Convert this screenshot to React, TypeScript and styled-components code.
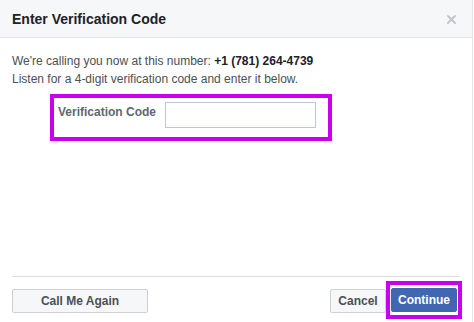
import React from "react";
import styled, { createGlobalStyle } from "styled-components";

const Global = createGlobalStyle`
  html, body { margin: 0; padding: 0; background: #fff; }
  body { font-family: "Liberation Sans", Arial, Helvetica, sans-serif; }
`;

const Dialog = styled.div`
  width: 472px;
  height: 322px;
  border-right: 1px solid #e3e4e6;
  display: flex;
  flex-direction: column;
  background: #fff;
`;

const Header = styled.div`
  height: 37px;
  background: #f6f7f9;
  border-bottom: 1px solid #e5e5e5;
  display: flex;
  align-items: center;
  justify-content: space-between;
  padding: 0 12px;
`;

const Title = styled.div`
  font-size: 14px;
  font-weight: bold;
  color: #1d2129;
  padding-top: 1px;
`;

const Close = styled.svg`
  width: 9px;
  height: 9px;
  margin-right: 4px;
  margin-top: 2px;
`;

const Body = styled.div`
  flex: 1;
  padding: 14px 12px 0;
`;

const Para = styled.p`
  margin: 0;
  font-size: 12px;
  line-height: 18px;
  color: #4b4f56;
  b { color: #1d2129; }
`;

const Highlight = styled.div`
  border: 4px solid #c800ee;
  box-sizing: border-box;
  width: 282px;
  height: 47px;
  margin: 6px 0 0 38px;
  padding: 4px 12px 0 4px;
  display: flex;
  align-items: flex-start;
`;

const Label = styled.label`
  flex: 1;
  white-space: nowrap;
  font-size: 12px;
  font-weight: bold;
  color: #606770;
  line-height: 16px;
  padding-top: 2px;
`;

const Input = styled.input`
  box-sizing: border-box;
  width: 151px;
  height: 26px;
  border: 1px solid #bdc7d8;
  padding: 3px;
  font: 12px "Liberation Sans", Arial, sans-serif;
  outline: none;
`;

const Footer = styled.div`
  margin: 0 12px;
  border-top: 1px solid #dddfe2;
  height: 46px;
  padding-top: 12px;
  box-sizing: border-box;
  display: flex;
  justify-content: space-between;
  align-items: flex-start;
`;

const Right = styled.div`
  display: flex;
  align-items: flex-start;
  margin-top: -8px;
  margin-right: -2px;
`;

const Button = styled.button<{ $primary?: boolean; $w: number }>`
  box-sizing: border-box;
  width: ${(p) => p.$w}px;
  height: 24px;
  border: 1px solid ${(p) => (p.$primary ? "#4267b2" : "#ced0d4")};
  background: ${(p) => (p.$primary ? "#4267b2" : "#f6f7f9")};
  color: ${(p) => (p.$primary ? "#fff" : "#4b4f56")};
  font: bold 12px "Liberation Sans", Arial, sans-serif;
  border-radius: 2px;
  padding: 0;
  display: flex;
  align-items: center;
  justify-content: center;
`;

const CancelWrap = styled.div`
  padding-top: 8px;
`;

const PrimaryHighlight = styled.div`
  border: 4px solid #c800ee;
  padding: 3px 1px;
`;

export default function App() {
  return (
    <>
      <Global />
      <Dialog>
        <Header>
          <Title>Enter Verification Code</Title>
          <Close viewBox="0 0 9 9">
            <path d="M1 1L8 8M8 1L1 8" stroke="#bec2c9" strokeWidth="1.8" strokeLinecap="round" />
          </Close>
        </Header>
        <Body>
          <Para>
            We're calling you now at this number: <b>+1 (781) 264-4739</b>
          </Para>
          <Para>Listen for a 4-digit verification code and enter it below.</Para>
          <Highlight>
            <Label htmlFor="code">Verification Code</Label>
            <Input id="code" />
          </Highlight>
        </Body>
        <Footer>
          <Button $w={136}>Call Me Again</Button>
          <Right>
            <CancelWrap>
              <Button $w={56}>Cancel</Button>
            </CancelWrap>
            <PrimaryHighlight>
              <Button $primary $w={66}>Continue</Button>
            </PrimaryHighlight>
          </Right>
        </Footer>
      </Dialog>
    </>
  );
}
